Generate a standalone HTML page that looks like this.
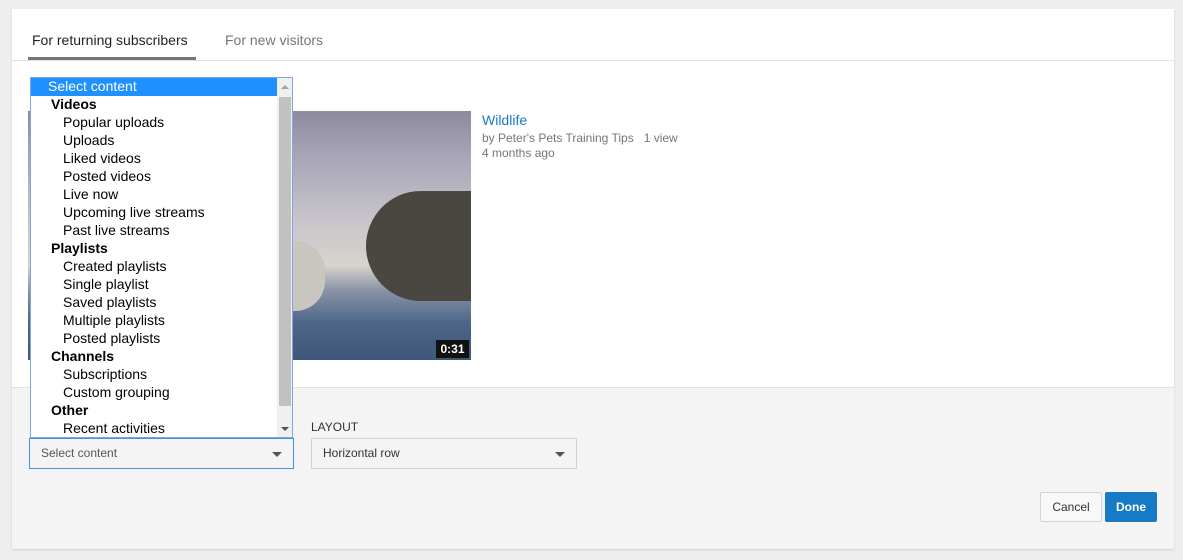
<!DOCTYPE html>
<html><head><style>
*{box-sizing:border-box;margin:0;padding:0}
body{width:1183px;height:560px;background:#eeeeee;font-family:"Liberation Sans",Arial,sans-serif;position:relative;overflow:hidden}
.card{position:absolute;left:12px;top:9px;width:1162px;height:540px;background:#fff;box-shadow:0 1px 2px rgba(0,0,0,.12)}
.hdr{position:absolute;left:0;top:0;width:1162px;height:52px;border-bottom:1px solid #e2e2e2}
.tab{position:absolute;top:23px;font-size:14px}
.ul{position:absolute;left:16px;top:48px;width:168px;height:3px;background:#767676}
.bottom{position:absolute;left:0;top:378px;width:1162px;height:162px;background:#f4f4f4;border-top:1px solid #e2e2e2}
.thumb{position:absolute;left:28px;top:111px;width:443px;height:249px;overflow:hidden;background:linear-gradient(180deg,#8d8aa0 0%,#a9a7b8 20%,#c9c6cc 45%,#d8d3cc 62%,#8a93a6 72%,#4d6688 85%,#3e5778 100%)}
.seal{position:absolute;left:338px;top:80px;width:130px;height:110px;background:#4a4640;border-radius:60px 0 20px 60px}
.seal2{position:absolute;left:262px;top:130px;width:35px;height:70px;background:#c9c6c0;border-radius:0 30px 30px 0}
.dur{position:absolute;left:436px;top:340px;width:33px;height:18px;background:#111;color:#fff;font-size:12px;font-weight:bold;text-align:center;line-height:18px}
.list{position:absolute;left:30px;top:77px;width:263px;height:361px;background:#fff;border:1px solid #7ea6e0;font-size:14px;color:#000;overflow:hidden}
.list .r{height:18px;line-height:17px;white-space:nowrap}
.g{font-weight:bold;padding-left:20px}
.i{padding-left:32px}
.sel{background:#1e90ff;color:#fff;padding-left:17px}
.sb{position:absolute;left:246px;top:0;width:16px;height:359px;background:#f0f0f0}
.th{position:absolute;left:2px;top:19px;width:12px;height:309px;background:#c1c1c1}
.box{position:absolute;height:31px;background:#f4f4f4;font-size:12px;color:#555;padding-left:11px;line-height:29px}
.arr{position:absolute;right:11px;top:13px;border-left:5px solid transparent;border-right:5px solid transparent;border-top:5px solid #555}
</style></head><body>
<div class="card">
 <div class="hdr">
  <div class="tab" style="left:20px;color:#222;font-weight:bold;font-weight:500">For returning subscribers</div>
  <div class="tab" style="left:213px;color:#777">For new visitors</div>
  <div class="ul"></div>
 </div>
 <div class="bottom">
  <div style="position:absolute;left:299px;top:32px;font-size:12px;color:#333">LAYOUT</div>
  <div style="position:absolute;left:1028px;top:104px;width:62px;height:30px;border:1px solid #d3d3d3;background:#f8f8f8;border-radius:2px;font-size:12px;color:#333;text-align:center;line-height:28px">Cancel</div>
  <div style="position:absolute;left:1093px;top:104px;width:52px;height:30px;background:#167ac6;border-radius:2px;font-size:12px;color:#fff;font-weight:bold;text-align:center;line-height:30px">Done</div>
 </div>
</div>
<div class="thumb"><div class="seal2"></div><div class="seal"></div></div>
<div class="dur">0:31</div>
<div style="position:absolute;left:482px;top:112px;font-size:14px;color:#167ac6">Wildlife</div>
<div style="position:absolute;left:482px;top:131px;font-size:12px;color:#767676;line-height:15px">by Peter's Pets Training Tips &nbsp; 1 view<br>4 months ago</div>
<div class="box" style="left:29px;top:438px;width:265px;border:1px solid #4a90d9">Select content<div class="arr"></div></div>
<div class="box" style="left:311px;top:438px;width:266px;border:1px solid #d3d3d3;color:#333">Horizontal row<div class="arr"></div></div>
<div class="list">
 <div class="r sel">Select content</div>
 <div class="r g">Videos</div>
 <div class="r i">Popular uploads</div><div class="r i">Uploads</div><div class="r i">Liked videos</div><div class="r i">Posted videos</div><div class="r i">Live now</div><div class="r i">Upcoming live streams</div><div class="r i">Past live streams</div>
 <div class="r g">Playlists</div>
 <div class="r i">Created playlists</div><div class="r i">Single playlist</div><div class="r i">Saved playlists</div><div class="r i">Multiple playlists</div><div class="r i">Posted playlists</div>
 <div class="r g">Channels</div>
 <div class="r i">Subscriptions</div><div class="r i">Custom grouping</div>
 <div class="r g">Other</div>
 <div class="r i">Recent activities</div>
 <div class="sb"><div class="th"></div>
  <div style="position:absolute;left:4px;top:7px;border-left:4px solid transparent;border-right:4px solid transparent;border-bottom:4px solid #a0a0a0;height:0;width:0"></div>
  <div style="position:absolute;left:4px;top:349px;border-left:4px solid transparent;border-right:4px solid transparent;border-top:4px solid #505050;height:0;width:0"></div>
 </div>
</div>
</body></html>
